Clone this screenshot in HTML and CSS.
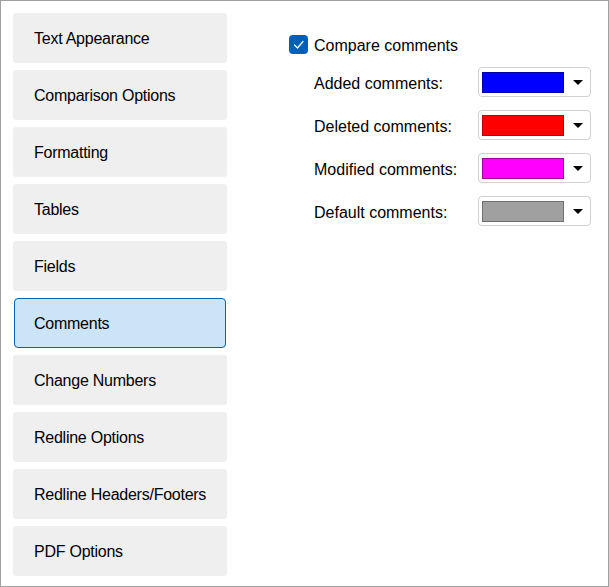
FILE: index.html
```html
<!DOCTYPE html>
<html>
<head>
<meta charset="utf-8">
<link rel="stylesheet" href="styles.css">
</head>
<body>
<div class="frame">
  <nav class="sidebar">
    <div class="nav-item">Text Appearance</div>
    <div class="nav-item">Comparison Options</div>
    <div class="nav-item">Formatting</div>
    <div class="nav-item">Tables</div>
    <div class="nav-item">Fields</div>
    <div class="nav-item selected">Comments</div>
    <div class="nav-item">Change Numbers</div>
    <div class="nav-item">Redline Options</div>
    <div class="nav-item">Redline Headers/Footers</div>
    <div class="nav-item">PDF Options</div>
  </nav>
  <main class="panel">
    <label class="check-row">
      <span class="checkbox">
        <svg width="19" height="19" viewBox="0 0 19 19"><polyline points="5.5,10 8.5,13 14,6.5" fill="none" stroke="#fff" stroke-width="1.2" stroke-linecap="round" stroke-linejoin="round"/></svg>
      </span>
      <span class="check-text">Compare comments</span>
    </label>
    <div class="options">
      <span class="label">Added comments:</span>
      <div class="dropdown"><span class="swatch blue"></span><span class="arrow"></span></div>
      <span class="label">Deleted comments:</span>
      <div class="dropdown"><span class="swatch red"></span><span class="arrow"></span></div>
      <span class="label">Modified comments:</span>
      <div class="dropdown"><span class="swatch magenta"></span><span class="arrow"></span></div>
      <span class="label">Default comments:</span>
      <div class="dropdown"><span class="swatch grey"></span><span class="arrow"></span></div>
    </div>
  </main>
</div>
</body>
</html>
```
FILE: styles.css
```css
* { box-sizing: border-box; }
html, body { margin: 0; padding: 0; background: #fff; }
body {
  font-family: "Liberation Sans", Arial, sans-serif;
  font-size: 16px;
  color: #000;
}
.frame {
  width: 609px;
  height: 587px;
  border: 1px solid #a0a0a0;
  display: flex;
  align-items: flex-start;
}
.sidebar {
  display: flex;
  flex-direction: column;
  gap: 7px;
  padding: 12px 0 0 12px;
  width: 226px;
}
.nav-item {
  height: 50px;
  width: 214px;
  background: #efefef;
  border: 1px solid transparent;
  border-radius: 3px;
  padding: 2px 0 0 20px;
  display: flex;
  align-items: center;
  letter-spacing: -0.25px;
}
.nav-item.selected {
  background: #cce4f7;
  border-color: #0063b1;
  border-radius: 4px;
  margin-left: 1px;
  width: 212px;
  padding-left: 19px;
}
.panel {
  padding: 34px 0 0 62px;
}
.check-row {
  display: flex;
  align-items: center;
  gap: 6px;
  height: 19px;
}
.check-text { padding-top: 2px; }
.checkbox {
  width: 19px;
  height: 19px;
  background: #005fb8;
  border-radius: 4px;
  display: block;
}
.checkbox svg { display: block; }
.options {
  display: grid;
  grid-template-columns: 164px 113px;
  row-gap: 13px;
  margin: 13px 0 0 25px;
  align-items: center;
}
.label { padding-top: 3px; }
.dropdown {
  height: 30px;
  border: 1px solid #d0d0d0;
  border-radius: 4px;
  background: #fff;
  display: flex;
  align-items: center;
  padding-left: 3px;
}
.swatch {
  width: 82px;
  height: 21px;
  border: 1px solid rgba(0,0,0,0.3);
}
.swatch.blue { background: #0000ff; border-color: #0000b0; }
.swatch.red { background: #ff0000; border-color: #c00000; }
.swatch.magenta { background: #ff00ff; border-color: #a000a0; }
.swatch.grey { background: #a0a0a0; border-color: #707070; }
.arrow {
  width: 0;
  height: 0;
  margin-left: 9px;
  border-left: 5px solid transparent;
  border-right: 5px solid transparent;
  border-top: 5px solid #000;
}
```
